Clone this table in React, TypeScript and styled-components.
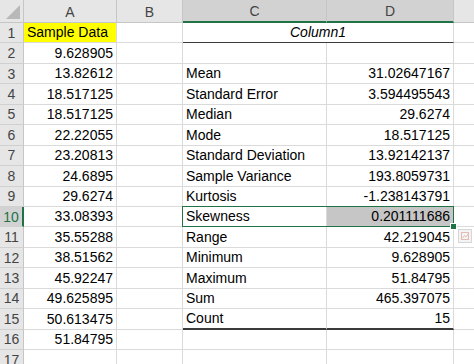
import styled, { createGlobalStyle } from "styled-components";

const GlobalStyle = createGlobalStyle`
  html, body {
    margin: 0;
    padding: 0;
    background: #ffffff;
    overflow: hidden;
  }
`;

const Sheet = styled.div`
  display: grid;
  grid-template-columns: 24px 93px 66px 144px 127px 40px;
  grid-template-rows: 23px repeat(17, 20.44px);
  width: 474px;
  height: 364px;
  overflow: hidden;
  font-family: "Liberation Sans", Arial, sans-serif;
  font-size: 14px;
  color: #000;
  background: #fff;
`;

const Corner = styled.div`
  position: relative;
  background: #e6e6e6;
  border-right: 1px solid #c6c6c6;
  border-bottom: 1px solid #c6c6c6;
`;

const CornerTriangle = styled.svg`
  position: absolute;
  right: 3px;
  bottom: 3px;
`;

const ColHead = styled.div<{ $active?: boolean }>`
  display: flex;
  align-items: center;
  justify-content: center;
  background: ${(p) => (p.$active ? "#d2d2d2" : "#e6e6e6")};
  border-right: 1px solid #c6c6c6;
  border-bottom: ${(p) => (p.$active ? "2px solid #217346" : "1px solid #c6c6c6")};
  color: #444;
  font-size: 14px;
  padding-top: 1px;
`;

const RowHead = styled.div<{ $active?: boolean }>`
  display: flex;
  align-items: center;
  justify-content: center;
  background: ${(p) => (p.$active ? "#d2d2d2" : "#e6e6e6")};
  border-right: ${(p) => (p.$active ? "2px solid #217346" : "1px solid #c6c6c6")};
  border-bottom: 1px solid #d0d0d0;
  color: ${(p) => (p.$active ? "#217346" : "#444")};
  font-size: 14px;
`;

const Cell = styled.div<{
  $align?: "left" | "right" | "center";
  $fill?: string;
  $italic?: boolean;
  $span?: number;
  $bottom?: string;
}>`
  display: flex;
  align-items: flex-end;
  justify-content: ${(p) =>
    p.$align === "right" ? "flex-end" : p.$align === "center" ? "center" : "flex-start"};
  grid-column: ${(p) => (p.$span ? `span ${p.$span}` : "auto")};
  padding: 0 3px 1px 3px;
  background: ${(p) => p.$fill ?? "#fff"};
  border-right: 1px solid #dadada;
  border-bottom: ${(p) => p.$bottom ?? "1px solid #dadada"};
  font-style: ${(p) => (p.$italic ? "italic" : "normal")};
  white-space: nowrap;
  line-height: 18px;
`;

const SelectedRange = styled.div`
  grid-column: span 2;
  display: grid;
  grid-template-columns: 144px 127px;
  position: relative;
`;

const Selection = styled.div`
  position: absolute;
  top: -1px;
  left: -1px;
  right: 0;
  bottom: 0;
  border: 1.5px solid #217346;
  pointer-events: none;
`;

const FillHandle = styled.div`
  position: absolute;
  right: -4px;
  bottom: -4px;
  width: 5px;
  height: 5px;
  background: #217346;
  border: 1px solid #fff;
`;

const QuickAnalysis = styled.svg`
  position: absolute;
  right: -19px;
  bottom: -17px;
`;

const sampleData = [
  "9.628905",
  "13.82612",
  "18.517125",
  "18.517125",
  "22.22055",
  "23.20813",
  "24.6895",
  "29.6274",
  "33.08393",
  "35.55288",
  "38.51562",
  "45.92247",
  "49.625895",
  "50.613475",
  "51.84795",
];

const stats: Record<number, [string, string]> = {
  3: ["Mean", "31.02647167"],
  4: ["Standard Error", "3.594495543"],
  5: ["Median", "29.6274"],
  6: ["Mode", "18.517125"],
  7: ["Standard Deviation", "13.92142137"],
  8: ["Sample Variance", "193.8059731"],
  9: ["Kurtosis", "-1.238143791"],
  10: ["Skewness", "0.201111686"],
  11: ["Range", "42.219045"],
  12: ["Minimum", "9.628905"],
  13: ["Maximum", "51.84795"],
  14: ["Sum", "465.397075"],
  15: ["Count", "15"],
};

const rows = Array.from({ length: 17 }, (_, i) => i + 1);
const DARK = "1px solid #3a3a3a";
const HEAVY = "2px solid #3a3a3a";

function StatCells({ r }: { r: number }) {
  const stat = stats[r];
  if (r === 1) {
    return (
      <Cell $span={2} $align="center" $italic $bottom={DARK}>
        Column1
      </Cell>
    );
  }
  if (r === 10) {
    return (
      <SelectedRange>
        <Cell>{stat[0]}</Cell>
        <Cell $align="right" $fill="#c6c6c6">
          {stat[1]}
        </Cell>
        <Selection>
          <FillHandle />
          <QuickAnalysis width="14" height="14" viewBox="0 0 14 14">
            <rect x="0.5" y="0.5" width="13" height="13" fill="#f4f4f4" stroke="#d6d6d6" />
            <rect x="3.5" y="3.5" width="7" height="7" fill="none" stroke="#e2bcb4" />
            <path d="M4.5 9 L6.5 6.5 L8 8 L10 5" fill="none" stroke="#e2bcb4" />
          </QuickAnalysis>
        </Selection>
      </SelectedRange>
    );
  }
  const bottom = r === 15 ? HEAVY : undefined;
  return (
    <>
      <Cell $bottom={bottom}>{stat ? stat[0] : ""}</Cell>
      <Cell $align="right" $bottom={bottom}>
        {stat ? stat[1] : ""}
      </Cell>
    </>
  );
}

export default function App() {
  return (
    <>
      <GlobalStyle />
      <Sheet>
        <Corner>
          <CornerTriangle width="14" height="14" viewBox="0 0 14 14">
            <polygon points="14,0 14,14 0,14" fill="#b8b8b8" />
          </CornerTriangle>
        </Corner>
        <ColHead>A</ColHead>
        <ColHead>B</ColHead>
        <ColHead $active>C</ColHead>
        <ColHead $active>D</ColHead>
        <ColHead />

        {rows.map((r) => [
          <RowHead key={`h${r}`} $active={r === 10}>
            {r}
          </RowHead>,
          r === 1 ? (
            <Cell key={`a${r}`} $fill="#ffff00">
              Sample Data
            </Cell>
          ) : (
            <Cell key={`a${r}`} $align="right">
              {sampleData[r - 2] ?? ""}
            </Cell>
          ),
          <Cell key={`b${r}`} />,
          <StatCells key={`cd${r}`} r={r} />,
          <Cell key={`e${r}`} />,
        ])}
      </Sheet>
    </>
  );
}
